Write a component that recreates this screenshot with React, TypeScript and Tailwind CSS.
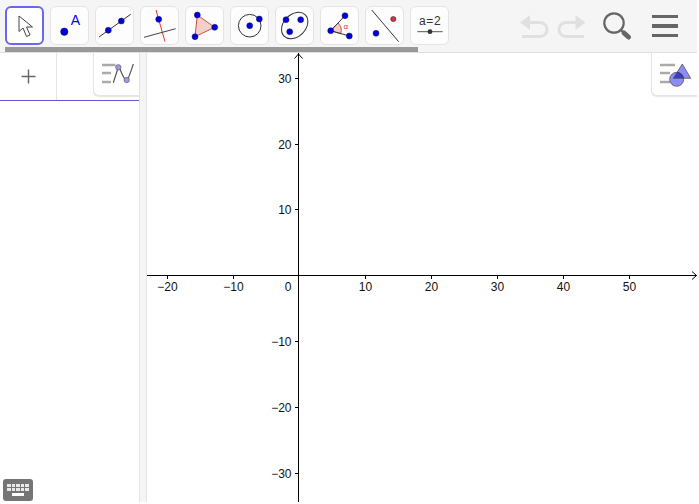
import React from "react";

const B = "#0000ee";
const Dot = ({ x, y, r = 3, c = "#0000dd" }: { x: number; y: number; r?: number; c?: string }) => (
  <circle cx={x} cy={y} r={r} fill={c} stroke="#14145a" strokeWidth={0.5} />
);

const Tool = ({ active, children }: { active?: boolean; children: React.ReactNode }) => (
  <button
    className={
      active
        ? "w-[39px] h-[39px] shrink-0 rounded-[6px] border-2 border-[#6b66ee] bg-white flex items-center justify-center"
        : "w-[39px] h-[39px] shrink-0 rounded-[6px] border border-[#e4e4e4] bg-[#fdfdfd] flex items-center justify-center"
    }
  >
    <svg width="39" height="39" viewBox="0 0 39 39" className="shrink-0">
      <g transform={active ? "translate(2 2)" : "translate(1 1)"}>{children}</g>
    </svg>
  </button>
);

const xTicks = [-20, -10, 10, 20, 30, 40, 50];
const yTicks: [number, number][] = [
  [30, 25],
  [20, 91],
  [10, 156],
  [-10, 288],
  [-20, 354],
  [-30, 420],
];
const OX = 151;
const OY = 222;
const FONT = "Liberation Sans, Arial, sans-serif";

function Graph() {
  return (
    <svg width="550" height="449" viewBox="0 0 550 449" className="block">
      <line x1="0" x2="550" y1={OY + 0.5} y2={OY + 0.5} stroke="#000" strokeWidth="1" />
      <line x1={OX + 0.5} x2={OX + 0.5} y1="0" y2="449" stroke="#000" strokeWidth="1" />
      <path d={`M${OX - 3.5} 5.5 L${OX + 0.5} 1 L${OX + 4.5} 5.5`} fill="none" stroke="#000" strokeWidth="1" />
      <path d={`M545 ${OY - 3.5} L549.5 ${OY + 0.5} L545 ${OY + 4.5}`} fill="none" stroke="#000" strokeWidth="1" />
      {xTicks.map((t) => {
        const x = Math.round(OX + 1 + t * 6.6) + 0.5;
        return (
          <g key={t}>
            <line x1={x} x2={x} y1={OY} y2={OY + 4} stroke="#000" />
            <text x={x} y={OY + 16} textAnchor="middle" fontSize="12" fontFamily={FONT} fill="#111">
              {t < 0 ? `\u2212${-t}` : t}
            </text>
          </g>
        );
      })}
      {yTicks.map(([t, py]) => {
        const y = py + 0.5;
        return (
          <g key={t}>
            <line x1={OX - 3} x2={OX} y1={y} y2={y} stroke="#000" />
            <text x={OX - 6.5} y={y + 4.5} textAnchor="end" fontSize="12" fontFamily={FONT} fill="#111">
              {t < 0 ? `\u2212${-t}` : t}
            </text>
          </g>
        );
      })}
      <text x={OX - 6.5} y={OY + 16} textAnchor="end" fontSize="12" fontFamily={FONT} fill="#111">
        0
      </text>
    </svg>
  );
}

export default function App() {
  return (
    <div className="w-[699px] h-[504px] bg-white overflow-hidden font-['Liberation_Sans',sans-serif]">
      <div className="w-[697px] h-[502px] bg-white flex flex-col overflow-hidden">
        {/* Toolbar */}
        <div className="relative h-[53px] shrink-0 bg-[#f5f5f5] border-b border-[#e0e0e0] flex pl-[5px] pt-[6px]">
          <div className="flex gap-[6px] items-start">
            <Tool active>
              <path d="M12 8 V23.5 L16 20 L19.5 28.5 L23 27 L19.5 19 H25.5 Z" fill="#fff" stroke="#444" strokeWidth="1" />
            </Tool>
            <Tool>
              <circle cx="13.3" cy="24.7" r="3.7" fill="#0000dd" stroke="#14145a" strokeWidth="0.5" />
              <text x="19.7" y="18" fontSize="14" fill={B} fontFamily={FONT}>A</text>
            </Tool>
            <Tool>
              <line x1="3" y1="30" x2="34.7" y2="7.3" stroke="#333" strokeWidth="1" />
              <Dot x={12.3} y={23.3} />
              <Dot x={25.3} y={14} />
            </Tool>
            <Tool>
              <line x1="15" y1="3" x2="24" y2="34.7" stroke="#f03030" strokeWidth="1" />
              <line x1="3" y1="30.3" x2="34.7" y2="21.7" stroke="#444" strokeWidth="1" />
              <Dot x={17.7} y={12.3} />
            </Tool>
            <Tool>
              <path d="M11.3 8 L28.7 20.3 L9 29.7 Z" fill="#f2cfc8" stroke="#c9504a" strokeWidth="1" />
              <Dot x={11.3} y={8} />
              <Dot x={28.7} y={20.3} />
              <Dot x={9} y={29.7} />
            </Tool>
            <Tool>
              <circle cx="18.7" cy="18.7" r="11.3" fill="none" stroke="#333" strokeWidth="1" />
              <Dot x={18.7} y={18.7} />
              <Dot x={28.3} y={12} />
            </Tool>
            <Tool>
              <ellipse cx="18.7" cy="18.5" rx="15" ry="11" transform="rotate(-45 18.7 18.5)" fill="none" stroke="#333" strokeWidth="1" />
              <Dot x={10} y={12.7} />
              <Dot x={24.7} y={12.7} />
              <Dot x={13.7} y={24.7} />
            </Tool>
            <Tool>
              <path d="M9.7 23.7 L17 16 A10.5 10.5 0 0 1 19.7 26.7 Z" fill="#f2cfc8" stroke="#c9504a" strokeWidth="1" />
              <line x1="9.7" y1="23.7" x2="24" y2="8.7" stroke="#333" strokeWidth="1" />
              <line x1="9.7" y1="23.7" x2="28.3" y2="29" stroke="#333" strokeWidth="1" />
              <Dot x={9.7} y={23.7} />
              <Dot x={24} y={8.7} />
              <Dot x={28.3} y={29} />
              <text x="22.5" y="21.5" fontSize="8" fill="#f03030" fontFamily={FONT}>α</text>
            </Tool>
            <Tool>
              <line x1="5.7" y1="3" x2="32.7" y2="34.7" stroke="#333" strokeWidth="1" />
              <Dot x={10} y={26.3} />
              <Dot x={27.3} y={12} r={2.6} c="#e03030" />
            </Tool>
            <Tool>
              <text x="19.2" y="18" textAnchor="middle" fontSize="12" letterSpacing="0.7" fill="#333" fontFamily={FONT}>a=2</text>
              <line x1="6.3" y1="24.7" x2="31.7" y2="24.7" stroke="#555" strokeWidth="1" />
              <circle cx="19" cy="24.7" r="2.4" fill="#333" />
            </Tool>
          </div>
          {/* Right controls */}
          <div className="flex items-center ml-[69px] h-[40px]">
            <svg width="32" height="26" viewBox="0 0 32 26" className="mt-[1px]">
              <path d="M11 8.5 H22 A6.5 6.5 0 0 1 22 22.5 H4" fill="none" stroke="#e0e0e0" strokeWidth="3" />
              <path d="M12 1 L2 8.5 L12 16 Z" fill="#e0e0e0" />
            </svg>
            <svg width="32" height="26" viewBox="0 0 32 26" className="ml-[7px] mt-[1px]">
              <path d="M19 8.5 H9 A6.5 6.5 0 0 0 9 22.5 H27" fill="none" stroke="#e0e0e0" strokeWidth="3" />
              <path d="M18.5 1 L28.5 8.5 L18.5 16 Z" fill="#e0e0e0" />
            </svg>
            <svg width="32" height="32" viewBox="0 0 32 32" className="ml-[12px]">
              <circle cx="13" cy="13" r="9.7" fill="none" stroke="#666" strokeWidth="2.2" />
              <line x1="20" y1="20" x2="23" y2="23" stroke="#666" strokeWidth="2.2" />
              <line x1="23" y1="23" x2="27.5" y2="27" stroke="#666" strokeWidth="5" strokeLinecap="round" />
            </svg>
            <div className="ml-[19px] flex flex-col gap-[6px] w-[26px]">
              <div className="h-[3.5px] bg-[#666]" />
              <div className="h-[3.5px] bg-[#666]" />
              <div className="h-[3.5px] bg-[#666]" />
            </div>
          </div>
          {/* Toolbar scrollbar */}
          <div className="absolute left-[5px] top-[47px] w-[413px] h-[5px] bg-[#999]" />
        </div>

        {/* Body */}
        <div className="flex-1 flex min-h-0">
          {/* Algebra panel */}
          <div className="relative w-[139px] shrink-0 bg-white">
            <div className="h-[48px] border-b border-[#6557d2] flex">
              <div className="w-[57px] h-full border-r border-[#e4e4e4] flex items-center justify-center">
                <svg width="15" height="15" viewBox="0 0 15 15">
                  <path d="M7.5 0.5 V14.5 M0.5 7.5 H14.5" stroke="#666" strokeWidth="1.4" />
                </svg>
              </div>
            </div>
            <div className="absolute right-0 top-0 w-[46px] h-[43px] bg-white border-l border-b border-[#e4e4e4] rounded-bl-[6px] shadow-[0_1px_1px_rgba(0,0,0,0.1)] flex items-start justify-start">
              <svg width="45" height="42" viewBox="0 0 45 42">
                <g transform="translate(-1 0)">
                  <path d="M9 12 H22.5 M9 20 H18 M9 29 H18" stroke="#aaa" strokeWidth="2.6" />
                  <path d="M20.3 29.7 L25.3 14.3 C27.5 14 30 27.5 33.7 27 C35.5 26.5 38 18 40.3 11" fill="none" stroke="#555" strokeWidth="1.2" />
                  <circle cx="25.3" cy="14.3" r="2.7" fill="#9a9ae8" stroke="#555" strokeWidth="0.6" />
                  <circle cx="33.7" cy="27" r="2.7" fill="#9a9ae8" stroke="#555" strokeWidth="0.6" />
                </g>
              </svg>
            </div>
            <div className="absolute left-[3px] bottom-[1px] w-[30px] h-[22px] rounded-[3px] bg-[#757575] flex flex-col items-center justify-center gap-[1px]">
              <div className="grid grid-cols-5 gap-[1px]">
                {Array.from({ length: 10 }).map((_, i) => (
                  <div key={i} className="w-[3.5px] h-[3px] bg-[#e8e8e8]" />
                ))}
              </div>
              <div className="w-[12px] h-[3px] bg-white mt-[1px]" />
            </div>
          </div>
          {/* Splitter */}
          <div className="w-[8px] shrink-0 bg-[#f5f5f5] border-x border-[#e4e4e4]" />
          {/* Graphics */}
          <div className="relative flex-1 bg-white overflow-hidden">
            <Graph />
            <div className="absolute right-0 top-0 w-[46px] h-[43px] bg-white border-l border-b border-[#e4e4e4] rounded-bl-[6px] shadow-[0_1px_1px_rgba(0,0,0,0.1)] flex items-start justify-start">
              <svg width="45" height="42" viewBox="0 0 45 42">
                <defs>
                  <clipPath id="tri">
                    <path d="M31.3 11 L39.7 25.3 H22.3 Z" />
                  </clipPath>
                </defs>
                <g transform="translate(-1 0)">
                  <path d="M9 12 H24 M9 20 H19 M9 29 H19" stroke="#aaa" strokeWidth="2.6" />
                  <circle cx="25.7" cy="26.3" r="7" fill="#8c8cf5" stroke="#555" strokeWidth="0.8" />
                  <path d="M31.3 11 L39.7 25.3 H22.3 Z" fill="#8c8cf5" stroke="#555" strokeWidth="0.8" />
                  <circle cx="25.7" cy="26.3" r="7" fill="#3c3cc0" stroke="#333" strokeWidth="0.8" clipPath="url(#tri)" />
                </g>
              </svg>
            </div>
          </div>
        </div>
      </div>
    </div>
  );
}
